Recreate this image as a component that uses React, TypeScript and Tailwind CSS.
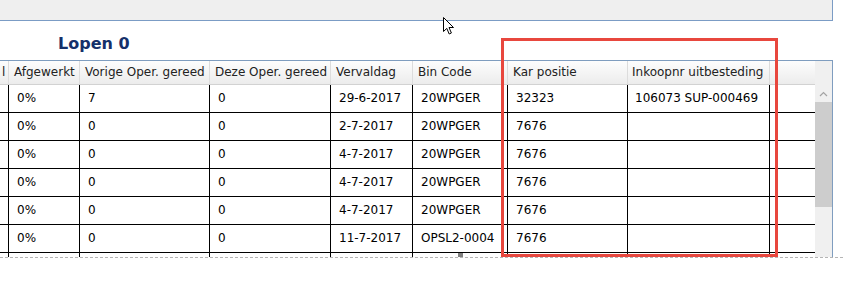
import React from "react";

const widths = [9, 71, 130, 121, 82, 95, 120, 142];
const headers = ["l", "Afgewerkt", "Vorige Oper. gereed", "Deze Oper. gereed", "Vervaldag", "Bin Code", "Kar positie", "Inkoopnr uitbesteding"];
const rows: string[][] = [
  ["", "0%", "7", "0", "29-6-2017", "20WPGER", "32323", "106073 SUP-000469"],
  ["", "0%", "0", "0", "2-7-2017", "20WPGER", "7676", ""],
  ["", "0%", "0", "0", "4-7-2017", "20WPGER", "7676", ""],
  ["", "0%", "0", "0", "4-7-2017", "20WPGER", "7676", ""],
  ["", "0%", "0", "0", "4-7-2017", "20WPGER", "7676", ""],
  ["", "0%", "0", "0", "11-7-2017", "OPSL2-0004", "7676", ""],
  ["", "", "", "", "", "", "", ""],
];

export default function App() {
  return (
    <div className="relative w-[843px] h-[281px] bg-white overflow-hidden" style={{ fontFamily: '"DejaVu Sans", Verdana, sans-serif' }}>
      {/* top gray panel */}
      <div className="w-[833px] h-[21px] bg-[#efefef] border-b border-r border-[#7b9cc5]" />
      {/* title */}
      <div className="h-[39px] pl-[58px] pt-[13px]">
        <div className="text-[16px] leading-[20px] font-bold text-[#15306a]">Lopen 0</div>
      </div>
      {/* grid */}
      <div className="w-[833px] h-[197px] border-t border-r border-[#7f9dbf] flex overflow-hidden">
        <div className="w-[815px] flex flex-col">
          <div className="flex h-[24px] border-b border-[#d2d2d2] bg-gradient-to-b from-[#fdfdfd] to-[#ececec] shrink-0">
            {headers.map((h, i) => (
              <div
                key={i}
                className={`shrink-0 border-r border-[#dcdcdc] text-[12px] leading-[23px] text-[#222] whitespace-nowrap overflow-hidden ${i === 0 ? "pl-[2px]" : i === 7 ? "pl-[4px]" : "pl-[5px]"}`}
                style={{ width: widths[i] }}
              >
                {h}
              </div>
            ))}
            <div className="flex-1" />
          </div>
          {rows.map((r, ri) => (
            <div key={ri} className="flex h-[28px] border-b border-black shrink-0">
              {r.map((c, ci) => (
                <div
                  key={ci}
                  className={`shrink-0 border-r border-black text-[12px] leading-[27px] text-black whitespace-nowrap overflow-hidden ${ci === 7 ? "pl-[7px]" : "pl-[8px]"}`}
                  style={{ width: widths[ci] }}
                >
                  {c}
                </div>
              ))}
              <div className="flex-1" />
            </div>
          ))}
        </div>
        {/* scrollbar */}
        <div className="w-[17px] bg-[#f0f0f0] flex flex-col">
          <div className="h-[41px] flex items-end justify-center pb-[5px]">
            <svg width="9" height="6" viewBox="0 0 9 6">
              <path d="M1 5 L4.5 1.5 L8 5" fill="none" stroke="#a3a3a3" strokeWidth="1.2" />
            </svg>
          </div>
          <div className="h-[105px] bg-[#cdcdcd]" />
        </div>
      </div>
      {/* dashed line */}
      <div className="w-[843px] border-t border-dashed border-[#b5b5b5]" />

      {/* resize handle */}
      <div className="absolute left-[458px] top-[253px] w-[5px] h-[4px] bg-[#7f7f7f]" />

      {/* red highlight box */}
      <div className="absolute left-[501px] top-[38px] w-[277px] h-[219px] border-[3px] border-[#e8473e]" />

      {/* mouse cursor */}
      <svg className="absolute left-[442px] top-[16px]" width="13" height="20" viewBox="0 0 13 20">
        <path d="M1.5 1.5 L1.5 15.5 L4.8 12.4 L7.2 18 L9.4 17 L7 11.5 L11.5 11.5 Z" fill="#ffffff" stroke="#000000" strokeWidth="1" strokeLinejoin="miter" />
      </svg>
    </div>
  );
}
